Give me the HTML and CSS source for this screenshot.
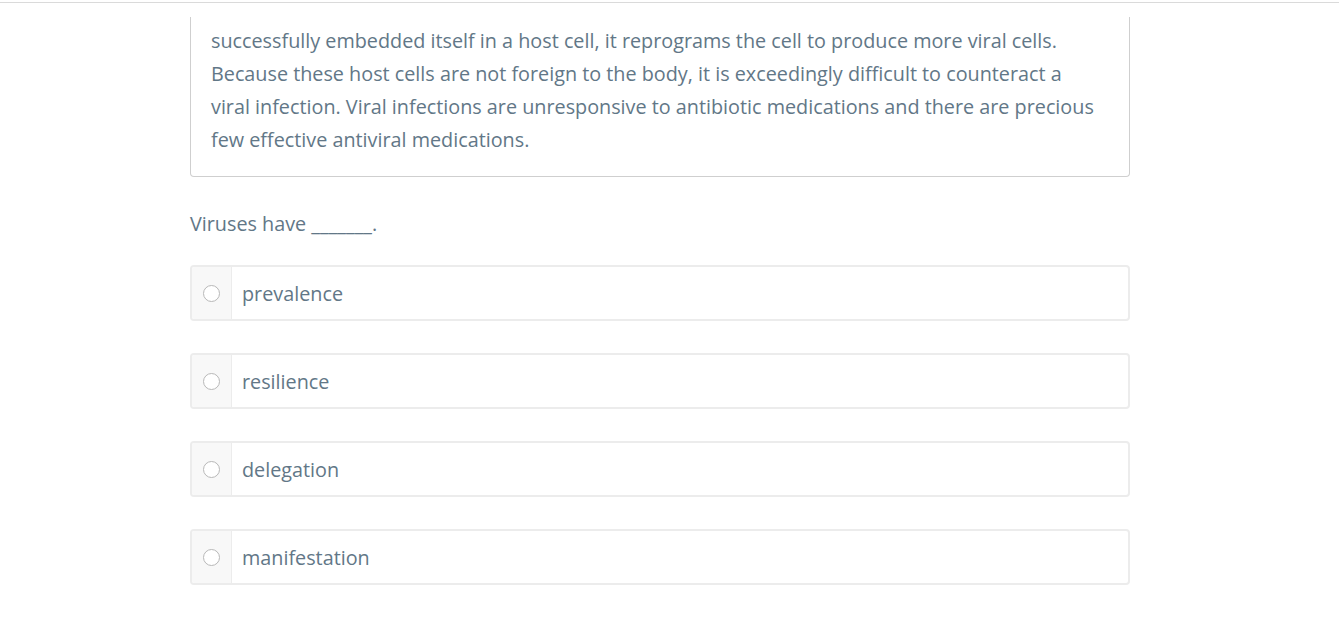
FILE: index.html
```html
<!DOCTYPE html>
<html>
<head>
<meta charset="utf-8">
<link rel="stylesheet" href="styles.css">
</head>
<body>
<div class="topbar"></div>
<main class="content">
  <div class="passage">
    <p>successfully embedded itself in a host cell, it reprograms the cell to produce more viral cells.<br>Because these host cells are not foreign to the body, it is exceedingly difficult to counteract a<br>viral infection. Viral infections are unresponsive to antibiotic medications and there are precious<br>few effective antiviral medications.</p>
  </div>
  <p class="question">Viruses have _______.</p>
  <ul class="options">
    <li class="option"><span class="radio-cell"><span class="radio"></span></span><span class="label">prevalence</span></li>
    <li class="option"><span class="radio-cell"><span class="radio"></span></span><span class="label">resilience</span></li>
    <li class="option"><span class="radio-cell"><span class="radio"></span></span><span class="label">delegation</span></li>
    <li class="option"><span class="radio-cell"><span class="radio"></span></span><span class="label">manifestation</span></li>
  </ul>
</main>
</body>
</html>
```
FILE: styles.css
```css
html, body {
  margin: 0;
  padding: 0;
  background: #fff;
}
body {
  font-family: "Open Sans", "Noto Sans", sans-serif;
  font-size: 19.8px;
  color: #627787;
}
.topbar {
  position: fixed;
  top: 0;
  left: 0;
  right: 0;
  height: 17px;
  background: #fff;
}
.topbar::before {
  content: "";
  display: block;
  margin-top: 2px;
  height: 1px;
  background: #dadada;
}
.content {
  width: 940px;
  margin-left: 190px;
  padding-top: 17px;
}
.passage {
  border: 1px solid #cfcfcf;
  border-top: none;
  border-radius: 0 0 4px 4px;
  padding: 7px 20px 20px 20px;
}
.passage p {
  margin: 0;
  line-height: 33px;
}
.question {
  margin: 30px 0 25px 0;
  line-height: 33px;
}
.options {
  list-style: none;
  margin: 0;
  padding: 0;
  display: flex;
  flex-direction: column;
  gap: 32px;
}
.option {
  display: flex;
  height: 52px;
  border: 2px solid #ececec;
  border-radius: 4px;
  overflow: hidden;
}
.radio-cell {
  width: 39px;
  background: #f8f8f8;
  border-right: 1px solid #ececec;
  display: flex;
  align-items: center;
  justify-content: center;
}
.radio {
  width: 15px;
  height: 15px;
  border: 1px solid #b8b8b8;
  border-radius: 50%;
  background: #fff;
}
.label {
  display: flex;
  align-items: center;
  padding-left: 10px;
}
```
